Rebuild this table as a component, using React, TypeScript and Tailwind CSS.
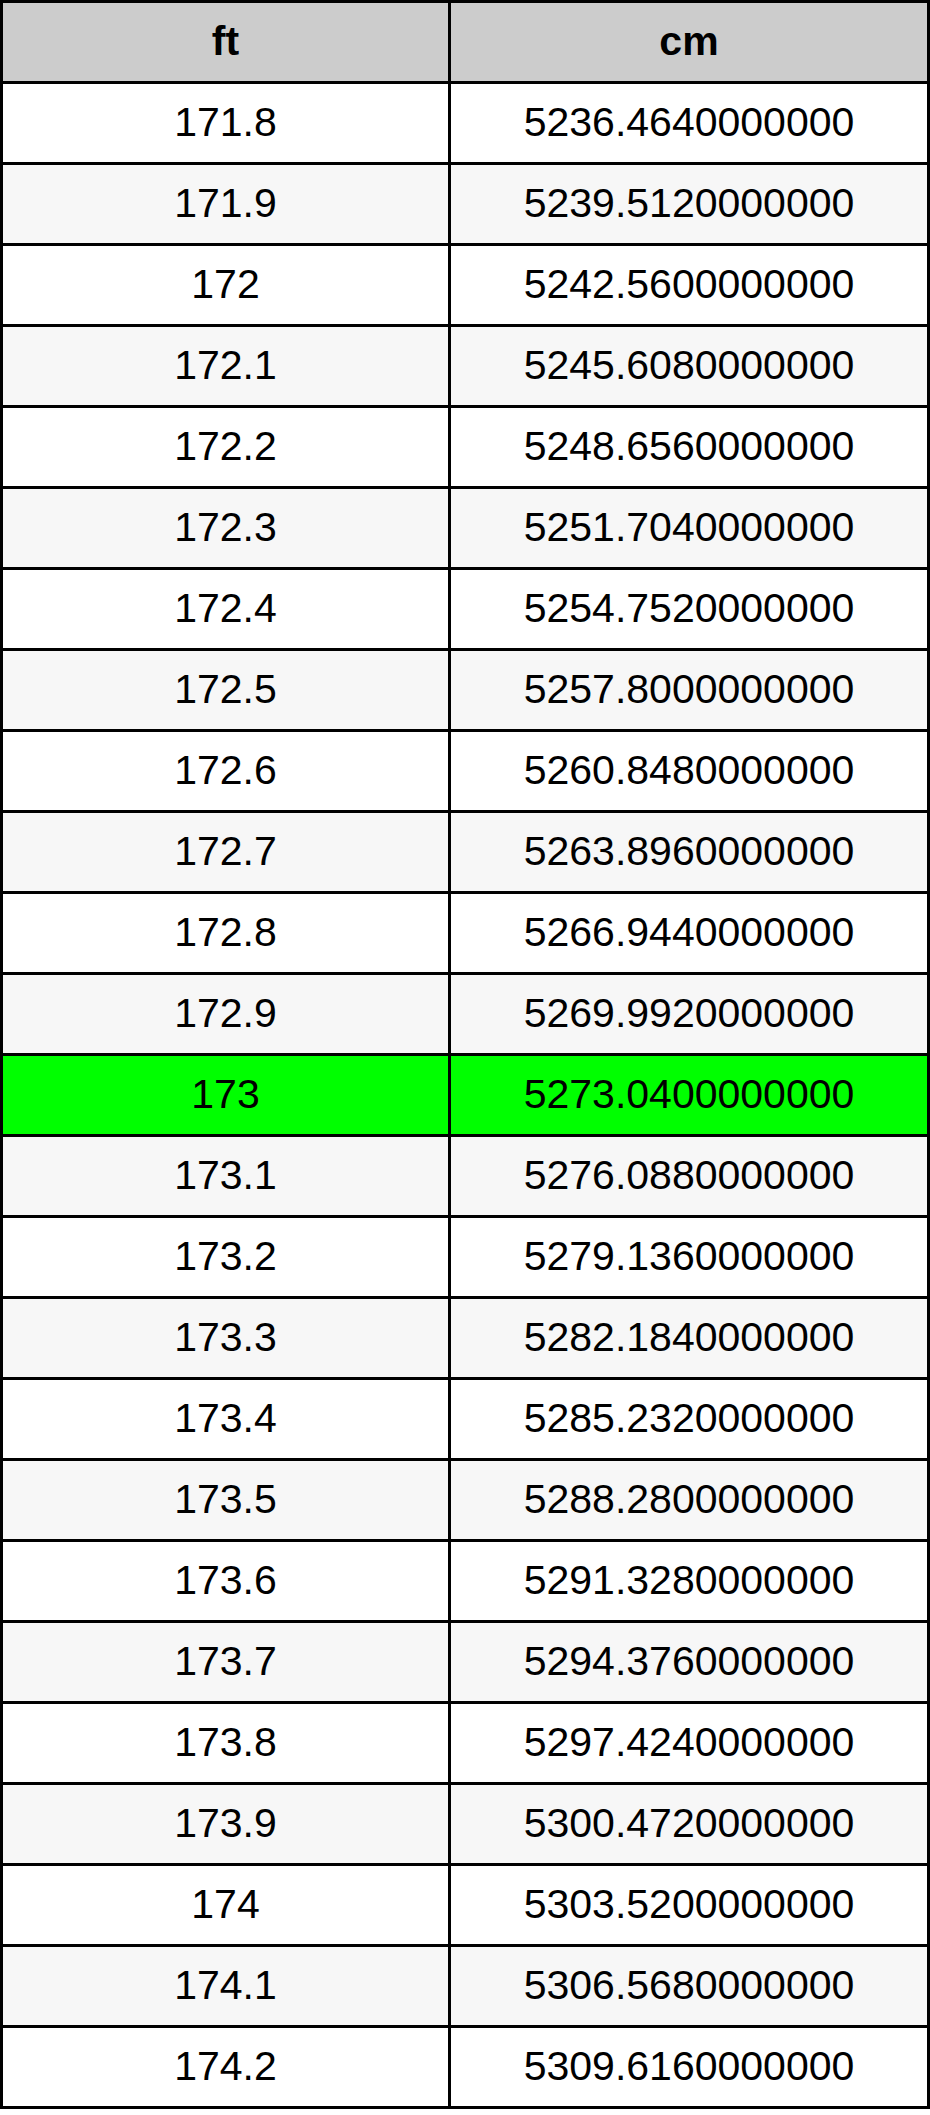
import React from "react";

const rows: [string, string][] = [
  ["171.8", "5236.4640000000"],
  ["171.9", "5239.5120000000"],
  ["172", "5242.5600000000"],
  ["172.1", "5245.6080000000"],
  ["172.2", "5248.6560000000"],
  ["172.3", "5251.7040000000"],
  ["172.4", "5254.7520000000"],
  ["172.5", "5257.8000000000"],
  ["172.6", "5260.8480000000"],
  ["172.7", "5263.8960000000"],
  ["172.8", "5266.9440000000"],
  ["172.9", "5269.9920000000"],
  ["173", "5273.0400000000"],
  ["173.1", "5276.0880000000"],
  ["173.2", "5279.1360000000"],
  ["173.3", "5282.1840000000"],
  ["173.4", "5285.2320000000"],
  ["173.5", "5288.2800000000"],
  ["173.6", "5291.3280000000"],
  ["173.7", "5294.3760000000"],
  ["173.8", "5297.4240000000"],
  ["173.9", "5300.4720000000"],
  ["174", "5303.5200000000"],
  ["174.1", "5306.5680000000"],
  ["174.2", "5309.6160000000"],
];

export default function App() {
  return (
    <div className="w-[930px] bg-white font-['Liberation_Sans',Arial,sans-serif] text-[41px] text-black">
      <div className="flex flex-col border-l-[3px] border-t-[3px] border-black">
        <div className="flex h-[81px] bg-[#cccccc] font-bold">
          <div className="flex w-[448px] items-center justify-center border-b-[3px] border-r-[3px] border-black">ft</div>
          <div className="flex w-[479px] items-center justify-center border-b-[3px] border-r-[3px] border-black">cm</div>
        </div>
        {rows.map(([a, b], i) => {
          const bg = a === "173" ? "bg-[#00ff00]" : i % 2 === 0 ? "bg-white" : "bg-[#f7f7f7]";
          return (
            <div key={a} className={`flex h-[81px] ${bg}`}>
              <div className="flex w-[448px] items-center justify-center border-b-[3px] border-r-[3px] border-black">{a}</div>
              <div className="flex w-[479px] items-center justify-center border-b-[3px] border-r-[3px] border-black">{b}</div>
            </div>
          );
        })}
      </div>
    </div>
  );
}
